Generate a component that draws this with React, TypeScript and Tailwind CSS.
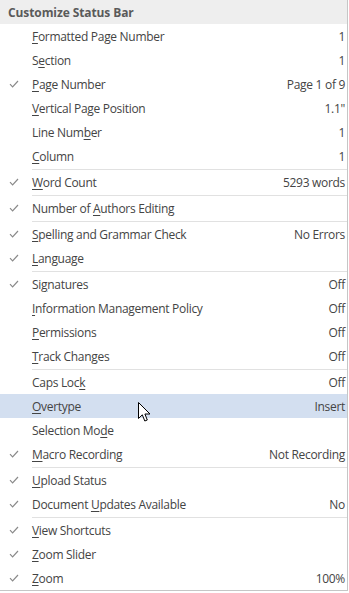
import React from "react";

type Item = { label: string; key: number; value?: string; checked?: boolean; hl?: boolean };
type Group = Item[];

const groups: Group[] = [
  [
    { label: "Formatted Page Number", key: 0, value: "1" },
    { label: "Section", key: 1, value: "1" },
    { label: "Page Number", key: 0, value: "Page 1 of 9", checked: true },
    { label: "Vertical Page Position", key: 0, value: "1.1\"" },
    { label: "Line Number", key: 8, value: "1" },
    { label: "Column", key: 0, value: "1" },
  ],
  [{ label: "Word Count", key: 0, value: "5293 words", checked: true }],
  [{ label: "Number of Authors Editing", key: 10, checked: true }],
  [
    { label: "Spelling and Grammar Check", key: 0, value: "No Errors", checked: true },
    { label: "Language", key: 0, checked: true },
  ],
  [
    { label: "Signatures", key: 2, value: "Off", checked: true },
    { label: "Information Management Policy", key: 0, value: "Off" },
    { label: "Permissions", key: 0, value: "Off" },
    { label: "Track Changes", key: 0, value: "Off" },
  ],
  [
    { label: "Caps Lock", key: 8, value: "Off" },
    { label: "Overtype", key: 0, value: "Insert", hl: true },
    { label: "Selection Mode", key: 12 },
    { label: "Macro Recording", key: 0, value: "Not Recording", checked: true },
  ],
  [
    { label: "Upload Status", key: 0, checked: true },
    { label: "Document Updates Available", key: 9, value: "No", checked: true },
  ],
  [
    { label: "View Shortcuts", key: 0, checked: true },
    { label: "Zoom Slider", key: 0, checked: true },
    { label: "Zoom", key: 0, value: "100%", checked: true },
  ],
];

function Check() {
  return (
    <svg width="10" height="8" viewBox="0 0 10 8" className="block">
      <path d="M1 4.2 L3.6 6.8 L9 1" fill="none" stroke="#8a8a8a" strokeWidth="1.2" />
    </svg>
  );
}

function Cursor() {
  return (
    <svg width="13" height="21" viewBox="0 0 13 21" className="absolute left-[138px] top-[8px]">
      <path
        d="M0.5 0.5 L0.5 16.5 L4.3 12.8 L6.8 19 L9.3 18 L6.9 12 L12 12 Z"
        fill="#ffffff"
        stroke="#000000"
        strokeWidth="1"
        strokeLinejoin="miter"
      />
    </svg>
  );
}

function Label({ text, k }: { text: string; k: number }) {
  return (
    <span>
      {text.slice(0, k)}
      <span className="underline underline-offset-[2px] decoration-[1px]">{text[k]}</span>
      {text.slice(k + 1)}
    </span>
  );
}

export default function App() {
  return (
    <div
      className="w-[349px] h-[593px] bg-white text-[12px] text-[#444444]"
      style={{ fontFamily: "'Open Sans', 'Noto Sans', sans-serif" }}
    >
      <div className="w-[348px] border-r border-b border-[#c6c6c6]">
        <div className="h-[24px] bg-[#eeeeee] flex items-center pl-[8px] pt-[1px] font-bold text-[#5a5a5a] tracking-[-0.1px]">
          Customize Status Bar
        </div>
        {groups.map((g, gi) => (
          <div key={gi}>
            {gi > 0 && (
              <div className="h-[2px] flex items-center pl-[32px]">
                <div className="h-px w-full bg-[#e1e1e1]" />
              </div>
            )}
            {g.map((it, i) => (
              <div
                key={i}
                className={`relative h-[24px] flex items-center tracking-[-0.3px] ${it.hl ? "bg-[#d3dff0]" : ""}`}
              >
                <div className="w-[32px] flex justify-center pr-[4px]">{it.checked && <Check />}</div>
                <div className="flex-1 whitespace-nowrap pt-[2px]">
                  <Label text={it.label} k={it.key} />
                </div>
                <div className="pr-[2px] pt-[2px] whitespace-nowrap">{it.value}</div>
                {it.hl && <Cursor />}
              </div>
            ))}
          </div>
        ))}
      </div>
    </div>
  );
}
